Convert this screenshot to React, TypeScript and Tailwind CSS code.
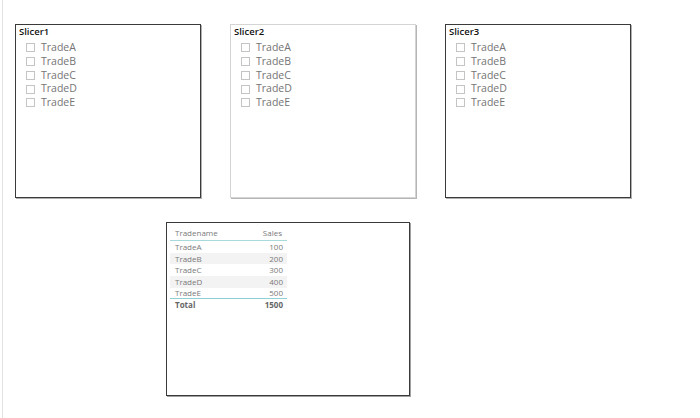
const trades = ['TradeA', 'TradeB', 'TradeC', 'TradeD', 'TradeE'];
const sales = [100, 200, 300, 400, 500];

function Slicer({ title, light }: { title: string; light?: boolean }) {
  return (
    <div
      className={`w-[186px] h-[174px] bg-white border ${
        light ? 'border-[#d4d4d4] shadow-[1px_1px_0_#b5b5b5]' : 'border-[#3a3a3a] shadow-[1px_1px_0_#b0b0b0]'
      }`}
    >
      <div className="pl-[3px] pt-[1px] text-[9.5px] leading-[11px] font-semibold text-[#111]">{title}</div>
      <ul className="mt-[4px] pl-[10px]">
        {trades.map(t => (
          <li key={t} className="flex items-center h-[13.75px] gap-[6px]">
            <span className="w-[9px] h-[9px] border border-[#c4c4c4] bg-white" />
            <span className="text-[10.5px] text-[#747474]">{t}</span>
          </li>
        ))}
      </ul>
    </div>
  );
}

export default function App() {
  return (
    <div
      className="w-full h-[418px] bg-white overflow-hidden"
      style={{ fontFamily: '"Open Sans", "Noto Sans", sans-serif' }}
    >
      <div className="ml-[2px] h-full border-l border-[#e2e2e2] pl-[12px] pt-[24px]">
        <div className="flex gap-[29px]">
          <Slicer title="Slicer1" />
          <Slicer title="Slicer2" light />
          <Slicer title="Slicer3" />
        </div>

        <div className="mt-[24px] ml-[151px] w-[244px] h-[174px] border border-[#3a3a3a] shadow-[1px_1px_0_#a0a0a0] bg-white">
          <div className="ml-[3px] mt-[2px] w-[117px] text-[8px] text-[#7a7a7a]">
            <div className="flex justify-between items-center h-[16px] border-b border-[#a6dadd] pl-[5px] pr-[5px]">
              <span>Tradename</span>
              <span>Sales</span>
            </div>
            {trades.map((t, i) => (
              <div
                key={t}
                className={`flex justify-between items-center h-[11.7px] pl-[5px] pr-[4px] ${
                  i % 2 === 1 ? 'bg-[#f3f3f3]' : ''
                } ${i === trades.length - 1 ? 'border-b border-[#8fd0d5]' : ''}`}
              >
                <span>{t}</span>
                <span>{sales[i]}</span>
              </div>
            ))}
            <div className="flex justify-between items-center h-[11px] pl-[5px] pr-[4px] font-bold text-[#666]">
              <span>Total</span>
              <span>1500</span>
            </div>
          </div>
        </div>
      </div>
    </div>
  );
}
